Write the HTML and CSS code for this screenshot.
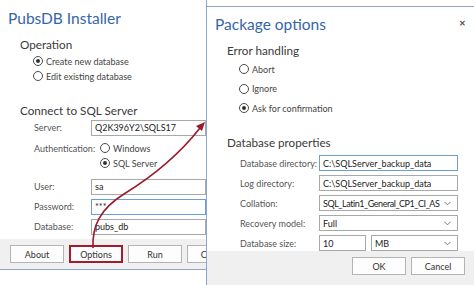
FILE: index.html
```html
<!DOCTYPE html>
<html lang="en">
<head>
  <meta charset="UTF-8">
  <title>PubsDB Installer</title>
  <link rel="stylesheet" href="styles.css">
</head>
<body>
  <div class="desk">

    <!-- main installer window -->
    <div class="win main">
      <h1 class="title">PubsDB Installer</h1>

      <h2 class="group">Operation</h2>
      <div class="radios">
        <div class="radio checked"><span class="dot"></span>Create new database</div>
        <div class="radio"><span class="dot"></span>Edit existing database</div>
      </div>

      <h2 class="group connect">Connect to SQL Server</h2>
      <div class="form">
        <div class="row">
          <label>Server:</label>
          <div class="input">Q2K396Y2\SQLS17</div>
        </div>
        <div class="row auth">
          <label>Authentication:</label>
          <div class="auth-opts">
            <div class="radio"><span class="dot"></span>Windows</div>
            <div class="radio checked"><span class="dot"></span>SQL Server</div>
          </div>
        </div>
        <div class="row user">
          <label>User:</label>
          <div class="input">sa</div>
        </div>
        <div class="row">
          <label>Password:</label>
          <div class="input focus">***</div>
        </div>
        <div class="row">
          <label>Database:</label>
          <div class="input">pubs_db</div>
        </div>
      </div>

      <div class="footer">
        <button class="btn">About</button>
        <button class="btn marked">Options</button>
        <button class="btn">Run</button>
        <button class="btn">Cancel</button>
      </div>
    </div>

    <!-- package options dialog -->
    <div class="win pkg">
      <div class="pkg-head">
        <h1 class="title">Package options</h1>
        <span class="close">&#x2715;</span>
      </div>

      <h2 class="group">Error handling</h2>
      <div class="radios tall">
        <div class="radio"><span class="dot"></span>Abort</div>
        <div class="radio"><span class="dot"></span>Ignore</div>
        <div class="radio checked"><span class="dot"></span>Ask for confirmation</div>
      </div>

      <h2 class="group props">Database properties</h2>
      <div class="form pkg-form">
        <div class="row">
          <label>Database directory:</label>
          <div class="input focus">C:\SQLServer_backup_data</div>
        </div>
        <div class="row">
          <label>Log directory:</label>
          <div class="input">C:\SQLServer_backup_data</div>
        </div>
        <div class="row">
          <label>Collation:</label>
          <div class="input select"><span class="tight">SQL_Latin1_General_CP1_CI_AS</span><svg class="chev" viewBox="0 0 8 5"><path d="M0.5 0.5 L4 4 L7.5 0.5"/></svg></div>
        </div>
        <div class="row">
          <label>Recovery model:</label>
          <div class="input select">Full<svg class="chev" viewBox="0 0 8 5"><path d="M0.5 0.5 L4 4 L7.5 0.5"/></svg></div>
        </div>
        <div class="row">
          <label>Database size:</label>
          <div class="input size">10</div>
          <div class="input select unit">MB<svg class="chev" viewBox="0 0 8 5"><path d="M0.5 0.5 L4 4 L7.5 0.5"/></svg></div>
        </div>
      </div>

      <div class="footer pkg-foot">
        <button class="btn">OK</button>
        <button class="btn">Cancel</button>
      </div>
    </div>

    <!-- annotation arrow from Options to the dialog -->
    <svg class="arrow" width="474" height="285" viewBox="0 0 474 285">
      <path d="M93 248 C92 226 100 209 124 194 C150 178 178 156 200 128" fill="none" stroke="#9c1a2c" stroke-width="1.6"/>
      <path d="M205 122 L196 126 L202 131 Z" fill="#9c1a2c"/>
    </svg>

  </div>
</body>
</html>
```
FILE: styles.css
```css
body {
  margin: 0;
  background-color: #fff;
  font-family: Lato, "Open Sans", sans-serif;
  color: #333;
}

.desk {
  position: relative;
  width: 474px;
  height: 285px;
  overflow: hidden;
}

.win {
  background-color: #fff;
  box-sizing: border-box;
}

/* main window */
.main {
  display: flex;
  flex-direction: column;
  width: 207px;
  height: 270px;
  border-right: 1px solid #8ba6cc;
  border-bottom: 1px solid #8ba6cc;
}

.title {
  margin: 0;
  font-size: 15.5px;
  font-weight: 400;
  line-height: 24px;
  color: #3466a8;
}

.main .title {
  padding: 6px 0 0 8px;
}

.group {
  margin: 5px 0 0 0;
  padding-left: 20px;
  font-size: 11.7px;
  font-weight: 400;
  line-height: 18px;
  color: #3a3a3a;
}

.group.connect {
  margin-top: 17px;
}

.radios {
  padding-left: 33px;
  margin-top: 0.5px;
}

.radio {
  display: flex;
  align-items: center;
  height: 15px;
  font-size: 9px;
  color: #444;
}

.radios.tall .radio {
  height: 19.5px;
}

.dot {
  position: relative;
  width: 8px;
  height: 8px;
  margin-right: 3px;
  border: 1px solid #4a4a4a;
  border-radius: 50%;
  flex-shrink: 0;
}

.radio.checked .dot::after {
  content: "";
  position: absolute;
  left: 2px;
  top: 2px;
  width: 4px;
  height: 4px;
  border-radius: 50%;
  background-color: #333;
}

.form {
  padding-left: 34px;
  margin-top: 1px;
}

.row {
  display: flex;
  align-items: center;
  height: 16px;
  margin-top: 4px;
}

.row:first-child {
  margin-top: 0;
}

.row label {
  width: 57px;
  flex-shrink: 0;
  font-size: 9px;
  color: #555;
}

.input {
  display: flex;
  align-items: center;
  box-sizing: border-box;
  flex: 1;
  min-width: 0;
  height: 16px;
  padding: 0 3px;
  border: 1px solid #a8a8a8;
  background-color: #fff;
  font-size: 9px;
  color: #222;
  white-space: nowrap;
  overflow: hidden;
}

.input.focus {
  border-color: #6a9fd4;
}

.row.auth {
  align-items: flex-start;
  height: auto;
  margin-top: 5px;
}

.row.auth label {
  line-height: 15px;
}

.auth-opts {
  padding-left: 9px;
}

.row.user {
  margin-top: 8px;
}

.footer {
  display: flex;
  gap: 5px;
  margin-top: auto;
  padding: 6px 10px;
  background-color: #f0f0f0;
}

.btn {
  flex-shrink: 0;
  width: 54px;
  height: 18px;
  padding: 0;
  border: 1px solid #b4b4b4;
  background-color: #fdfdfd;
  font-family: inherit;
  font-size: 9px;
  color: #333;
}

.btn.marked {
  border: 2px solid #a31b2d;
}

/* package options dialog */
.pkg {
  position: absolute;
  left: 206px;
  top: 6px;
  display: flex;
  flex-direction: column;
  width: 268px;
  height: 279px;
  border-top: 1px solid #8ba6cc;
  border-left: 1px solid #8ba6cc;
}

.pkg-head {
  display: flex;
  justify-content: space-between;
  align-items: flex-start;
  padding: 5px 0 0 8px;
}

.close {
  margin: 6px 8px 0 0;
  font-size: 8px;
  font-weight: 700;
  color: #555;
}

.pkg .radios {
  padding-left: 32px;
}

.group.props {
  margin-top: 15px;
}

.pkg-form {
  padding-left: 33px;
  margin-top: 4px;
  width: 218px;
}

.pkg-form .row label {
  width: 79px;
}

.select {
  justify-content: space-between;
  padding-right: 6px;
}

.tight {
  letter-spacing: -0.45px;
}

.chev {
  flex-shrink: 0;
  width: 7px;
  height: 5px;
}

.chev path {
  fill: none;
  stroke: #666;
  stroke-width: 1;
}

.input.size {
  flex: 0 0 47px;
}

.input.unit {
  margin-left: 5px;
}

.pkg-foot {
  padding: 6px 0 0 145px;
  height: 40px;
  box-sizing: border-box;
}

.arrow {
  position: absolute;
  left: 0;
  top: 0;
  pointer-events: none;
}
```
